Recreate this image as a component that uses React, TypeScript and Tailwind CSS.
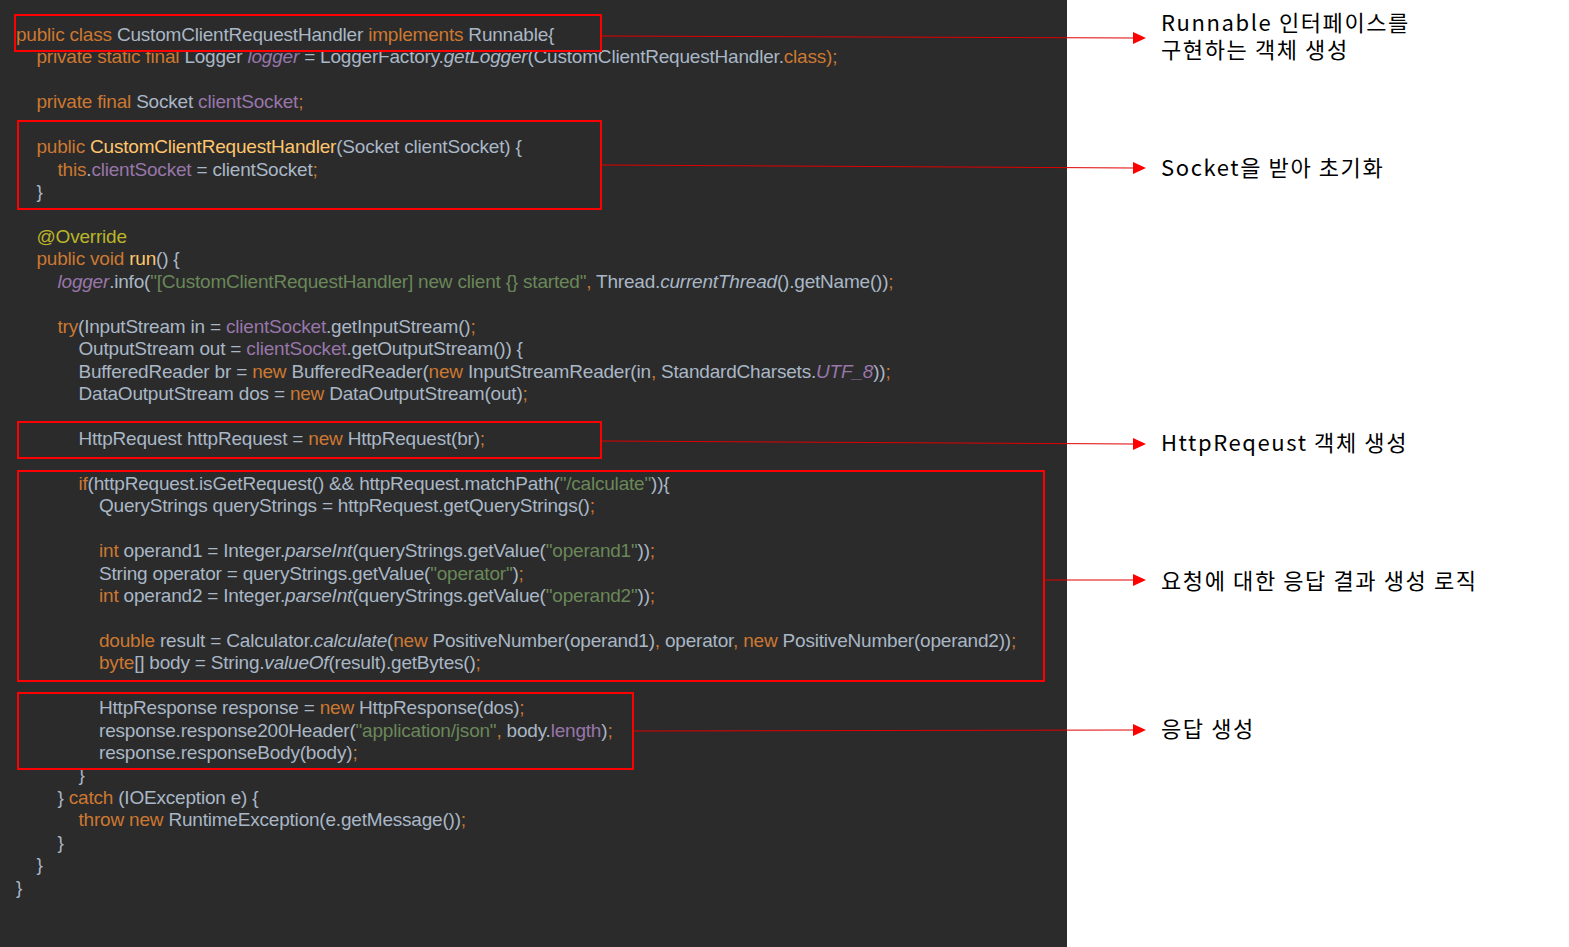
import React from "react";

type T = [string, string?];
const K = "text-[#cc7832]";
const P = "text-[#9876aa]";
const S = "text-[#6a8759]";
const M = "text-[#ffc66d]";
const A = "text-[#bbb529]";
const I = "italic";
const PI = "italic text-[#9876aa]";

const lines: [number, T[]][] = [
  [0, [["public class ", K], ["CustomClientRequestHandler "], ["implements ", K], ["Runnable{"]]],
  [1, [["private static final ", K], ["Logger "], ["logger", PI], [" = LoggerFactory."], ["getLogger", I], ["(CustomClientRequestHandler."], ["class", K], [");", K]]],
  [0, []],
  [1, [["private final ", K], ["Socket "], ["clientSocket", P], [";", K]]],
  [0, []],
  [1, [["public ", K], ["CustomClientRequestHandler", M], ["(Socket clientSocket) {"]]],
  [2, [["this", K], [".", ], ["clientSocket", P], [" = clientSocket"], [";", K]]],
  [1, [["}"]]],
  [0, []],
  [1, [["@Override", A]]],
  [1, [["public void ", K], ["run", M], ["() {"]]],
  [2, [["logger", PI], [".info("], ["\"[CustomClientRequestHandler] new client {} started\"", S], [", ", K], ["Thread."], ["currentThread", I], ["().getName())"], [";", K]]],
  [0, []],
  [2, [["try", K], ["(InputStream in = "], ["clientSocket", P], [".getInputStream()"], [";", K]]],
  [3, [["OutputStream out = "], ["clientSocket", P], [".getOutputStream()) {"]]],
  [3, [["BufferedReader br = "], ["new ", K], ["BufferedReader("], ["new ", K], ["InputStreamReader(in"], [", ", K], ["StandardCharsets."], ["UTF_8", PI], ["))"], [";", K]]],
  [3, [["DataOutputStream dos = "], ["new ", K], ["DataOutputStream(out)"], [";", K]]],
  [0, []],
  [3, [["HttpRequest httpRequest = "], ["new ", K], ["HttpRequest(br)"], [";", K]]],
  [0, []],
  [3, [["if", K], ["(httpRequest.isGetRequest() && httpRequest.matchPath("], ["\"/calculate\"", S], [")){"]]],
  [4, [["QueryStrings queryStrings = httpRequest.getQueryStrings()"], [";", K]]],
  [0, []],
  [4, [["int ", K], ["operand1 = Integer."], ["parseInt", I], ["(queryStrings.getValue("], ["\"operand1\"", S], ["))"], [";", K]]],
  [4, [["String operator = queryStrings.getValue("], ["\"operator\"", S], [")"], [";", K]]],
  [4, [["int ", K], ["operand2 = Integer."], ["parseInt", I], ["(queryStrings.getValue("], ["\"operand2\"", S], ["))"], [";", K]]],
  [0, []],
  [4, [["double ", K], ["result = Calculator."], ["calculate", I], ["("], ["new ", K], ["PositiveNumber(operand1)"], [", ", K], ["operator"], [", ", K], ["new ", K], ["PositiveNumber(operand2))"], [";", K]]],
  [4, [["byte", K], ["[] body = String."], ["valueOf", I], ["(result).getBytes()"], [";", K]]],
  [0, []],
  [4, [["HttpResponse response = "], ["new ", K], ["HttpResponse(dos)"], [";", K]]],
  [4, [["response.response200Header("], ["\"application/json\"", S], [", ", K], ["body."], ["length", P], [")"], [";", K]]],
  [4, [["response.responseBody(body)"], [";", K]]],
  [3, [["}"]]],
  [2, [["} "], ["catch ", K], ["(IOException e) {"]]],
  [3, [["throw new ", K], ["RuntimeException(e.getMessage())"], [";", K]]],
  [2, [["}"]]],
  [1, [["}"]]],
  [0, [["}"]]],
];

const indent = ["pl-0", "pl-[20.5px]", "pl-[41.5px]", "pl-[62.5px]", "pl-[83px]"];

const boxes = [
  "left-[14px] top-[14px] w-[588px] h-[38px]",
  "left-[17px] top-[120px] w-[585px] h-[90px]",
  "left-[17px] top-[421px] w-[585px] h-[38px]",
  "left-[17px] top-[470px] w-[1028px] h-[212px]",
  "left-[17px] top-[692px] w-[617px] h-[78px]",
];

export default function App() {
  return (
    <div className="relative w-[1569px] h-[947px] bg-white flex overflow-hidden" style={{ fontFamily: "'Liberation Sans', Arial, sans-serif" }}>
      <div className="w-[1067px] shrink-0 h-full bg-[#2b2b2b] pt-[24px] pl-[16px] text-[#a9b7c6] text-[19px] leading-[22.45px] tracking-[-0.2px]">
        {lines.map(([lv, toks], i) => (
          <div key={i} className={`h-[22.45px] whitespace-pre ${indent[lv]}`}>
            {toks.map(([t, c], j) => (
              <span key={j} className={c}>{t}</span>
            ))}
          </div>
        ))}
      </div>
      <div className="flex-1 pl-[94px] text-black text-[22px] leading-[27px] tracking-[1.6px]" style={{ fontFamily: "'Noto Sans CJK KR', 'Noto Sans', sans-serif" }}>
        <div className="pt-[8px]">Runnable 인터페이스를<br />구현하는 객체 생성</div>
        <div className="pt-[91px]">Socket을 받아 초기화</div>
        <div className="pt-[248px]">HttpReqeust 객체 생성</div>
        <div className="pt-[111px]">요청에 대한 응답 결과 생성 로직</div>
        <div className="pt-[121px]">응답 생성</div>
      </div>
      {boxes.map((b, i) => (
        <div key={i} className={`absolute border-2 border-[#ff0000] ${b}`} />
      ))}
      <svg className="absolute left-0 top-0" width="1569" height="947">
        {[
          [602, 36, 1133, 38],
          [602, 165, 1133, 168],
          [602, 441, 1133, 444],
          [1045, 580, 1133, 580],
          [634, 731, 1133, 730],
        ].map(([x1, y1, x2, y2], i) => (
          <g key={i}>
            <line x1={x1} y1={y1} x2={x2} y2={y2} stroke="#e00000" strokeWidth="1" />
            <polygon points={`${x2},${y2 - 6} ${x2 + 13},${y2} ${x2},${y2 + 6}`} fill="#ff0000" />
          </g>
        ))}
      </svg>
    </div>
  );
}
